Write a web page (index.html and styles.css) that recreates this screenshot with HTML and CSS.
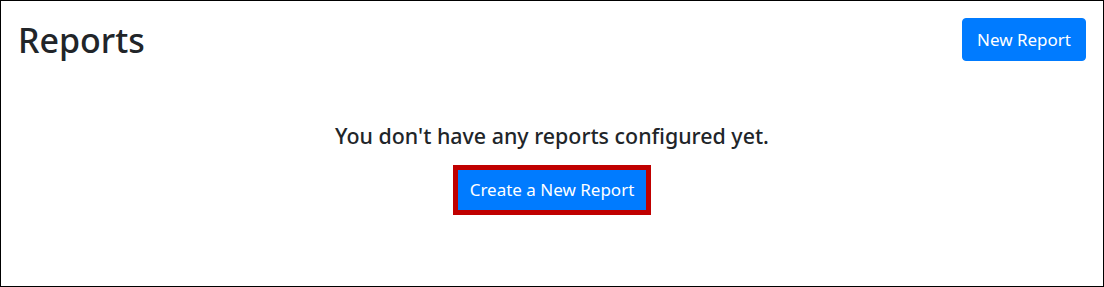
FILE: index.html
```html
<!DOCTYPE html>
<html lang="en">

<head>
    <meta charset="UTF-8">
    <meta name="viewport" content="width=device-width, initial-scale=1.0">
    <title>Reports</title>
    <link rel="stylesheet" href="styles.css">
</head>

<body>
    <div class="page">
        <div class="page-header">
            <h2 class="page-title">Reports</h2>
            <button class="btn btn-primary">New Report</button>
        </div>

        <div class="empty-state">
            <h5 class="empty-message">You don't have any reports configured yet.</h5>
            <button class="btn btn-primary btn-highlight">Create a New Report</button>
        </div>
    </div>
</body>

</html>
```

FILE: styles.css
```css
* {
    margin: 0;
    padding: 0;
    box-sizing: border-box;
}

body {
    font-family: 'Noto Sans', 'Open Sans', sans-serif;
    color: #212529;
    background: white;
}

.page {
    width: 1104px;
    height: 287px;
    border: 1px solid #000;
    padding: 17px 17px;
}

.page-header {
    display: flex;
    justify-content: space-between;
    align-items: center;
}

.page-title {
    font-size: 34px;
    font-weight: 500;
    line-height: 1.2;
    margin-top: 2px;
}

.btn {
    font-family: inherit;
    font-size: 17px;
    line-height: 27px;
    padding: 7px 14px;
    border: 1px solid transparent;
    border-radius: 4px;
    cursor: pointer;
}

.btn-primary {
    background: #007bff;
    border-color: #007bff;
    color: white;
}

.empty-state {
    text-align: center;
    margin-top: 62px;
}

.empty-message {
    font-size: 21.4px;
    font-weight: 500;
    line-height: 1.2;
    margin-bottom: 21px;
}

.btn-highlight {
    border-radius: 0;
    line-height: 26px;
    padding: 6px 11px;
    outline: 5px solid #c00000;
}
```
